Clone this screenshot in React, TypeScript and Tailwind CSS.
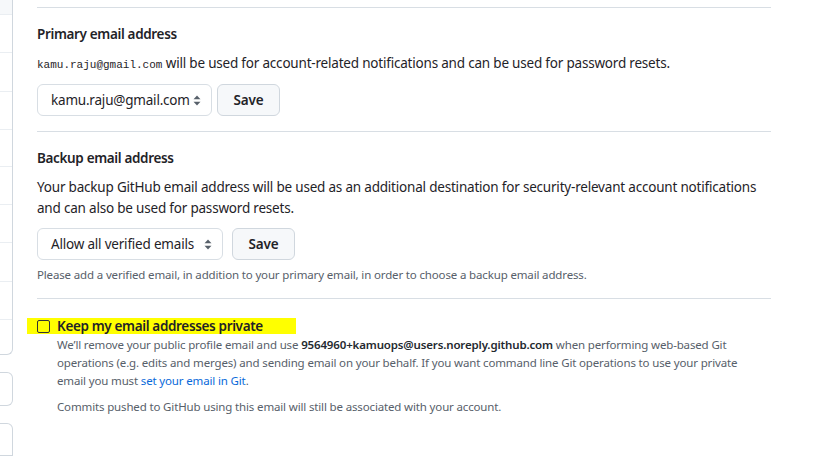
import React from "react";

const font = { fontFamily: '"Noto Sans", "Open Sans", sans-serif' };

function SelectArrows() {
  return (
    <svg width="8" height="11" viewBox="0 0 8 11" className="shrink-0">
      <path d="M4 0.5 L7.5 4.2 H0.5 Z" fill="#57606a" />
      <path d="M4 10.5 L7.5 6.8 H0.5 Z" fill="#57606a" />
    </svg>
  );
}

function SelectBox({ label, width }: { label: string; width: string }) {
  return (
    <div
      className={`${width} h-[32px] flex items-center justify-between pl-[13px] pr-[10px] rounded-md border border-[#d8dee4] bg-white text-[13.5px] tracking-[-0.2px] text-[#1f2328]`}
    >
      <span className="whitespace-nowrap">{label}</span>
      <SelectArrows />
    </div>
  );
}

function SaveButton() {
  return (
    <button className="w-[63px] h-[32px] rounded-md border border-[#d0d7de] bg-[#f6f8fa] text-[13.5px] tracking-[-0.2px] font-semibold text-[#1f2328]">
      Save
    </button>
  );
}

// left nav column, only its right edge shows in the shot
function SideNav() {
  const rows = [15, 38, 39, 38, 37, 38, 38, 39, 38, 34];
  return (
    <div className="w-[13px] shrink-0 flex flex-col">
      <div className="border-r border-b border-[#d0d7de] rounded-br-md">
        {rows.map((h, i) => (
          <div
            key={i}
            style={{ height: h }}
            className={`${i === 0 ? "bg-[#f6f8fa]" : ""} ${i < rows.length - 1 ? "border-b border-[#eaeef2]" : ""}`}
          />
        ))}
      </div>
      <div className="mt-[17px] h-[41px] border border-l-0 border-[#d0d7de] rounded-r-md" />
      <div className="mt-[17px] h-[40px] border border-l-0 border-[#d0d7de] rounded-tr-md" />
    </div>
  );
}

export default function App() {
  return (
    <div style={font} className="w-[818px] h-[456px] overflow-hidden bg-white flex text-[#1f2328]">
      <SideNav />

      <div className="ml-[24px] w-[734px] pt-[7px]">
        {/* Primary email */}
        <div className="border-t border-[#d8dee4] pt-[16px] pb-[15px] border-b">
          <h3 className="text-[13.5px] leading-[21px] font-semibold tracking-[-0.35px]">Primary email address</h3>
          <p className="mt-[8px] h-[21px] text-[13.5px] leading-[21px] tracking-[-0.2px]">
            <span style={{ fontFamily: '"Liberation Mono", monospace' }} className="text-[11px] leading-none tracking-normal">
              kamu.raju@gmail.com
            </span>{" "}
            will be used for account-related notifications and can be used for password resets.
          </p>
          <div className="mt-[10px] flex gap-[5px]">
            <SelectBox label="kamu.raju@gmail.com" width="w-[175px]" />
            <SaveButton />
          </div>
        </div>

        {/* Backup email */}
        <div className="pt-[16px] pb-[14px] border-b border-[#d8dee4]">
          <h3 className="text-[13.5px] leading-[21px] font-semibold tracking-[-0.35px]">Backup email address</h3>
          <p className="mt-[8px] text-[13.5px] leading-[21px] tracking-[-0.2px] whitespace-nowrap">
            Your backup GitHub email address will be used as an additional destination for security-relevant account notifications
            <br />
            and can also be used for password resets.
          </p>
          <div className="mt-[9px] flex gap-[9px]">
            <SelectBox label="Allow all verified emails" width="w-[186px]" />
            <SaveButton />
          </div>
          <p className="mt-[6px] text-[11.5px] leading-[18px] tracking-[-0.15px] text-[#57606a]">
            Please add a verified email, in addition to your primary email, in order to choose a backup email address.
          </p>
        </div>

        {/* Private emails */}
        <div className="pt-[19px]">
          <label className="-ml-[10px] pl-[10px] w-[269px] h-[16px] flex items-center gap-[7px] bg-[#ffff00]">
            <span className="w-[13px] h-[13px] rounded-[2px] border border-[#333333] bg-transparent shrink-0" />
            <span className="text-[13.5px] font-semibold leading-[16px] tracking-[-0.35px] whitespace-nowrap">
              Keep my email addresses private
            </span>
          </label>
          <div className="pl-[20px] text-[11.5px] leading-[18px] tracking-[-0.15px] text-[#57606a] whitespace-nowrap">
            <p className="mt-[2px]">
              We’ll remove your public profile email and use{" "}
              <span className="font-semibold text-[#24292f]">9564960+kamuops@users.noreply.github.com</span> when performing web-based Git
              <br />
              operations (e.g. edits and merges) and sending email on your behalf. If you want command line Git operations to use your private
              <br />
              email you must <a className="text-[#0969da]">set your email in Git</a>.
            </p>
            <p className="mt-[8px]">Commits pushed to GitHub using this email will still be associated with your account.</p>
          </div>
        </div>
      </div>
    </div>
  );
}
